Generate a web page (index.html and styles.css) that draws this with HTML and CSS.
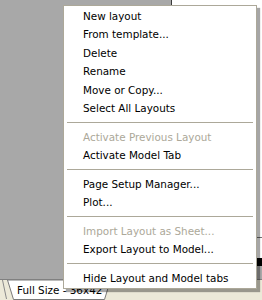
FILE: index.html
```html
<!DOCTYPE html>
<html>
<head>
<meta charset="utf-8">
<link rel="stylesheet" href="styles.css">
</head>
<body>
<div class="screen">
  <div class="canvas">
    <div class="paper"></div>
  </div>
  <div class="tabbar">
    <svg class="tabs" width="262" height="20" viewBox="0 0 262 20">
      <line x1="2.5" y1="0" x2="6.5" y2="19" stroke="#8a8a8a" stroke-width="1"/>
      <polygon points="7.5,0 110.5,0 104.5,19.5 13.5,19.5" fill="#ffffff" stroke="#7a7a7a" stroke-width="1"/>
      <text x="17" y="14" class="tabtext">Full Size - 36x42</text>
    </svg>
  </div>
  <ul class="menu">
    <li class="item">New layout</li>
    <li class="item">From template...</li>
    <li class="item">Delete</li>
    <li class="item">Rename</li>
    <li class="item">Move or Copy...</li>
    <li class="item">Select All Layouts</li>
    <li class="sep"></li>
    <li class="item disabled">Activate Previous Layout</li>
    <li class="item">Activate Model Tab</li>
    <li class="sep"></li>
    <li class="item">Page Setup Manager...</li>
    <li class="item">Plot...</li>
    <li class="sep"></li>
    <li class="item disabled">Import Layout as Sheet...</li>
    <li class="item">Export Layout to Model...</li>
    <li class="sep"></li>
    <li class="item">Hide Layout and Model tabs</li>
  </ul>
</div>
</body>
</html>
```
FILE: styles.css
```css
html, body {
  margin: 0;
  padding: 0;
  background: #a8a8a8;
}
.screen {
  position: relative;
  width: 262px;
  height: 300px;
  overflow: hidden;
  font-family: "DejaVu Sans", sans-serif;
}
.canvas {
  position: relative;
  height: 279px;
  background: #a8a8a8;
  border-bottom: 1px solid #808080;
}
.paper {
  position: absolute;
  left: 171px;
  top: -10px;
  width: 120px;
  height: 268px;
  background: #ffffff;
  border-left: 1px solid #3a3a3a;
  border-bottom: 8px solid #000000;
}
.paper::after {
  content: "";
  position: absolute;
  left: 0;
  right: 0;
  top: 247px;
  height: 1px;
  background: #707070;
}
.tabbar {
  height: 20px;
  background: #ece9d8;
}
.tabs {
  display: block;
}
.tabtext {
  font-family: "DejaVu Sans", sans-serif;
  font-size: 10.4px;
  fill: #000000;
}
.menu {
  position: absolute;
  left: 63px;
  top: 5px;
  width: 194px;
  box-sizing: border-box;
  margin: 0;
  padding: 1px 0;
  list-style: none;
  background: #ffffff;
  border: 1px solid #aca899;
  box-shadow: 3px 3px 1px rgba(0, 0, 0, 0.35);
  font-family: "DejaVu Sans", sans-serif;
  font-size: 10.4px;
}
.item {
  height: 18.4px;
  line-height: 18.4px;
  padding-left: 19px;
  color: #000000;
  white-space: nowrap;
}
.item.disabled {
  color: #aca899;
}
.sep {
  height: 1px;
  margin: 4.65px 3px;
  background: #aca899;
}
```
